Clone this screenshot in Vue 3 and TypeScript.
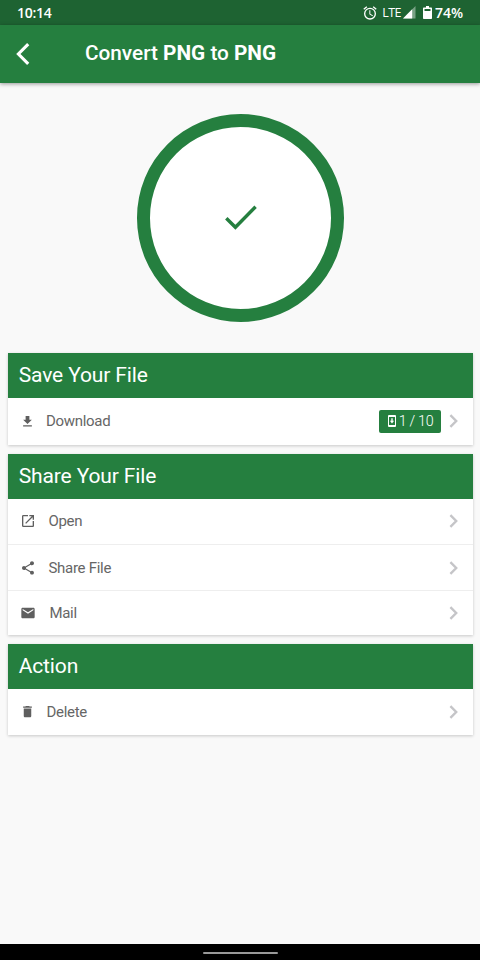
<script setup lang="ts">
interface Row {
  label: string
  icon: string
  iconWidth: number
  gap: number
  badge?: string
}

interface Section {
  title: string
  rows: Row[]
}

const icons: Record<string, string> = {
  download: 'M19 9h-4V3H9v6H5l7 7 7-7zM5 18v2h14v-2H5z',
  open: 'M19 19H5V5h7V3H5a2 2 0 0 0-2 2v14a2 2 0 0 0 2 2h14c1.1 0 2-.9 2-2v-7h-2v7zM14 3v2h3.59l-9.83 9.83 1.41 1.41L19 6.41V10h2V3h-7z',
  share: 'M18 16.08c-.76 0-1.44.3-1.96.77L8.91 12.7c.05-.23.09-.46.09-.7s-.04-.47-.09-.7l7.05-4.11c.54.5 1.25.81 2.04.81 1.66 0 3-1.34 3-3s-1.34-3-3-3-3 1.34-3 3c0 .24.04.47.09.7L8.04 9.81C7.5 9.31 6.79 9 6 9c-1.66 0-3 1.34-3 3s1.34 3 3 3c.79 0 1.5-.31 2.04-.81l7.12 4.16c-.05.21-.08.43-.08.65 0 1.61 1.31 2.92 2.92 2.92s2.92-1.31 2.92-2.92-1.31-2.92-2.92-2.92z',
  mail: 'M20 4H4c-1.1 0-1.99.9-1.99 2L2 18c0 1.1.9 2 2 2h16c1.1 0 2-.9 2-2V6c0-1.1-.9-2-2-2zm0 4l-8 5-8-5V6l8 5 8-5v2z',
  trash: 'M6 19c0 1.1.9 2 2 2h8c1.1 0 2-.9 2-2V7H6v12zM19 4h-3.5l-1-1h-5l-1 1H5v2h14V4z',
}

const sections: Section[] = [
  {
    title: 'Save Your File',
    rows: [{ label: 'Download', icon: 'download', iconWidth: 15, gap: 11, badge: '1 / 10' }],
  },
  {
    title: 'Share Your File',
    rows: [
      { label: 'Open', icon: 'open', iconWidth: 16, gap: 12 },
      { label: 'Share File', icon: 'share', iconWidth: 16, gap: 12 },
      { label: 'Mail', icon: 'mail', iconWidth: 16, gap: 13 },
    ],
  },
  {
    title: 'Action',
    rows: [{ label: 'Delete', icon: 'trash', iconWidth: 15, gap: 11 }],
  },
]
</script>

<template>
  <div class="screen">
    <div class="status">
      <span class="time">10:14</span>
      <div class="indicators">
        <svg class="alarm" viewBox="0 0 24 24">
          <path d="M22 5.72l-4.6-3.86-1.29 1.53 4.6 3.86L22 5.72zM7.88 3.39L6.6 1.86 2 5.71l1.29 1.53 4.59-3.85zM12.5 8H11v6l4.75 2.85.75-1.23-4-2.37V8zM12 4a9 9 0 1 0 0 18 9 9 0 0 0 0-18zm0 16a7 7 0 1 1 0-14 7 7 0 0 1 0 14z" />
        </svg>
        <span class="lte">LTE</span>
        <svg class="signal" viewBox="0 0 12 12">
          <path d="M12 0v12H0z" opacity=".4" />
          <path d="M8.8 3.2V12H0z" />
        </svg>
        <svg class="battery" viewBox="0 0 9 13">
          <path d="M3 0h3v1.4h2c.6 0 1 .4 1 1V12c0 .6-.4 1-1 1H1c-.6 0-1-.4-1-1V2.4c0-.6.4-1 1-1h2z" />
          <path class="battery-gap" d="M1.5 3h6v2h-6z" />
        </svg>
        <span class="percent">74%</span>
      </div>
    </div>

    <header class="bar">
      <svg class="back" viewBox="0 0 14 22">
        <path d="M12.2 1.2L2.4 11l9.8 9.8" />
      </svg>
      <h1>Convert <b>PNG</b> to <b>PNG</b></h1>
    </header>

    <main>
      <div class="ring">
        <svg viewBox="0 0 32 25">
          <path d="M1.3 13.2l9.1 9.1L30.6 1.8" />
        </svg>
      </div>

      <section v-for="section in sections" :key="section.title" class="card">
        <h2>{{ section.title }}</h2>
        <div v-for="row in section.rows" :key="row.label" class="row" :class="{ tall: row.badge }">
          <svg
            class="icon"
            viewBox="0 0 24 24"
            :style="{ width: row.iconWidth + 'px', height: row.iconWidth + 'px', marginRight: row.gap + 'px' }"
          >
            <path :d="icons[row.icon]" />
          </svg>
          <span class="label">{{ row.label }}</span>
          <span v-if="row.badge" class="badge">
            <svg viewBox="0 0 8 12">
              <rect width="8" height="12" rx="1" />
              <path class="badge-screen" d="M1 2h6v8H1z" />
              <path d="M3.3 3.3h1.4v2.5h1.4L4 8.4 1.9 5.8h1.4z" />
            </svg>
            <span>{{ row.badge }}</span>
          </span>
          <svg class="chevron" viewBox="0 0 9 14">
            <path d="M1.4 1.2L7.2 7l-5.8 5.8" />
          </svg>
        </div>
      </section>
    </main>

    <footer class="nav"><span class="handle"></span></footer>
  </div>
</template>

<style>
body {
  margin: 0;
}
</style>

<style scoped>
.screen {
  width: 480px;
  height: 960px;
  display: flex;
  flex-direction: column;
  overflow: hidden;
  background: #f9f9f9;
  font-family: Roboto, sans-serif;
}

svg {
  display: block;
  flex: none;
}

.status {
  flex: none;
  height: 25px;
  box-sizing: border-box;
  padding: 0 17px;
  display: flex;
  align-items: center;
  justify-content: space-between;
  background: #1e6332;
  color: #fff;
  font-family: "Open Sans", sans-serif;
  font-size: 14px;
  font-weight: 600;
  line-height: 24px;
}

.time {
  letter-spacing: -0.3px;
}

.indicators {
  display: flex;
  align-items: center;
}

.indicators svg {
  fill: #fff;
}

.alarm {
  width: 16px;
  height: 16px;
}

.lte {
  margin-left: 4.5px;
  font-size: 12.5px;
  font-weight: 400;
  letter-spacing: -0.6px;
}

.signal {
  width: 12.5px;
  height: 12.5px;
  margin-left: 2.5px;
}

.battery {
  width: 9px;
  height: 13px;
  margin: 0 3px 0 7px;
}

.indicators .battery-gap {
  fill: #1e6332;
}

.bar {
  position: relative;
  flex: none;
  height: 58px;
  box-sizing: border-box;
  padding-left: 16.3px;
  display: flex;
  align-items: center;
  background: #257f3f;
  box-shadow: 0 1px 4px rgba(0, 0, 0, 0.4);
}

.back {
  width: 14px;
  height: 22px;
}

.back path {
  fill: none;
  stroke: #fff;
  stroke-width: 3.1;
}

h1 {
  margin: 0 0 2px 54.7px;
  color: #fff;
  font-size: 20.75px;
  font-weight: 500;
  line-height: 24px;
}

h1 b {
  font-weight: 700;
}

main {
  flex: 1;
  padding: 31px 7px 0 8.4px;
}

.ring {
  width: 207.5px;
  height: 208px;
  box-sizing: border-box;
  margin: 0 auto 31.2px;
  border: 13.5px solid #257f3f;
  border-radius: 50%;
  background: #fff;
  display: flex;
  align-items: center;
  justify-content: center;
}

.ring svg {
  width: 32px;
  height: 25px;
  margin-bottom: 2px;
}

.ring path {
  fill: none;
  stroke: #257f3f;
  stroke-width: 3.4;
}

.card {
  margin-bottom: 9px;
  background: #fff;
  box-shadow: 0 1px 3px rgba(0, 0, 0, 0.2);
}

h2 {
  height: 44.5px;
  margin: 0;
  padding-left: 10.3px;
  background: #257f3f;
  color: #fff;
  font-size: 21px;
  font-weight: 400;
  line-height: 44px;
  letter-spacing: -0.13px;
}

.row {
  height: 45.6px;
  box-sizing: border-box;
  padding: 0 14.8px 0 12px;
  display: flex;
  align-items: center;
}

.row + .row {
  border-top: 1.5px solid #eee;
}

.row.tall {
  height: 47.5px;
  padding-left: 11.5px;
}

.icon {
  fill: #5f5f5f;
}

.label {
  flex: 1;
  color: #666;
  font-size: 15px;
  line-height: 20px;
  letter-spacing: -0.28px;
}

.badge {
  width: 62px;
  height: 23px;
  box-sizing: border-box;
  padding-left: 8.5px;
  margin-right: 8px;
  display: flex;
  align-items: center;
  border-radius: 2px;
  background: #257f3f;
  color: #fff;
  font-size: 14.3px;
  font-weight: 300;
  letter-spacing: -0.3px;
}

.badge svg {
  width: 8px;
  height: 12px;
  margin-right: 3px;
  fill: #fff;
}

.badge .badge-screen {
  fill: #257f3f;
}

.chevron {
  width: 9px;
  height: 14px;
}

.chevron path {
  fill: none;
  stroke: #c5c5c8;
  stroke-width: 2.4;
}

.nav {
  flex: none;
  height: 16px;
  display: flex;
  align-items: center;
  justify-content: center;
  background: #000;
}

.handle {
  width: 75px;
  height: 2px;
  margin-top: 2px;
  border-radius: 1px;
  background: #999;
}
</style>
